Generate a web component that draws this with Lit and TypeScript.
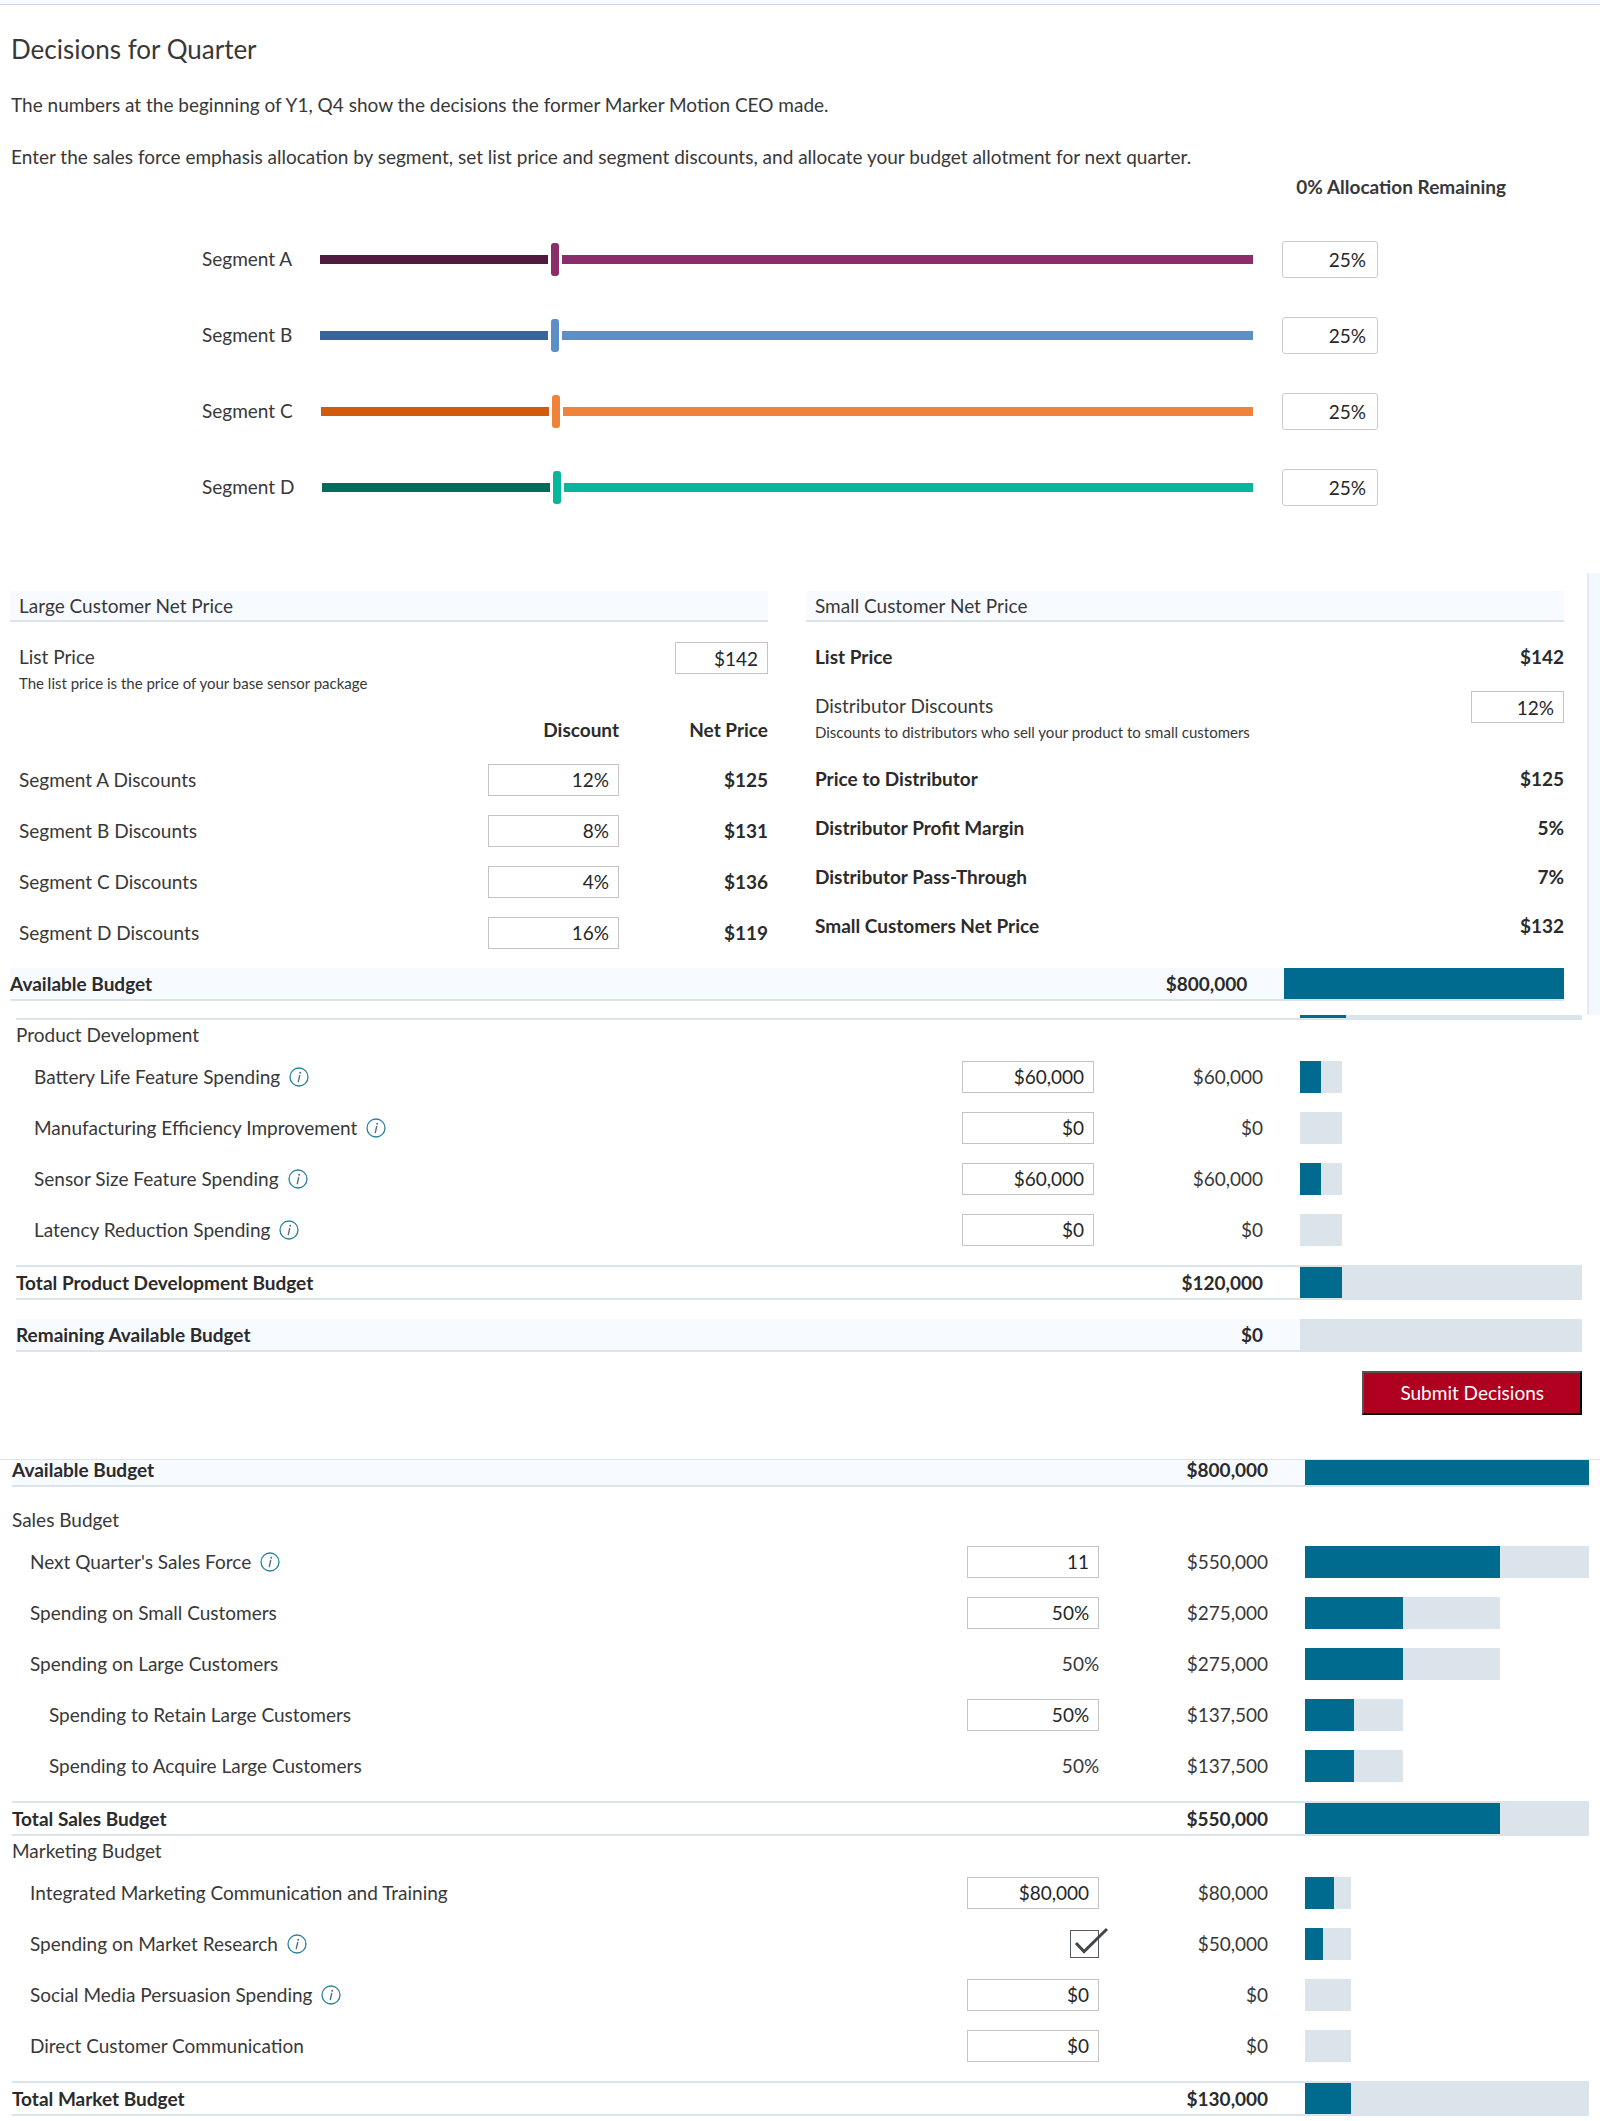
import { LitElement, html, css, nothing } from "lit";
import { customElement, property } from "lit/decorators.js";

interface Segment { name: string; share: number; dark: string; light: string; discount: string; net: string; }
interface Line {
  label: string;
  amount: string;
  track: number;
  fill: number;
  value?: string;
  fixed?: string;
  checked?: boolean;
  info?: boolean;
  nested?: boolean;
}

const SEGMENTS: Segment[] = [
  { name: "Segment A", share: 25, dark: "#511b3f", light: "#8a2d69", discount: "12%", net: "$125" },
  { name: "Segment B", share: 25, dark: "#36669d", light: "#5b8fc6", discount: "8%", net: "$131" },
  { name: "Segment C", share: 25, dark: "#d25a0c", light: "#f0833a", discount: "4%", net: "$136" },
  { name: "Segment D", share: 25, dark: "#056b5b", light: "#09b59b", discount: "16%", net: "$119" },
];

const PRODUCT: Line[] = [
  { label: "Battery Life Feature Spending", info: true, value: "$60,000", amount: "$60,000", track: 15, fill: 50 },
  { label: "Manufacturing Efficiency Improvement", info: true, value: "$0", amount: "$0", track: 15, fill: 0 },
  { label: "Sensor Size Feature Spending", info: true, value: "$60,000", amount: "$60,000", track: 15, fill: 50 },
  { label: "Latency Reduction Spending", info: true, value: "$0", amount: "$0", track: 15, fill: 0 },
];

const SALES: Line[] = [
  { label: "Next Quarter's Sales Force", info: true, value: "11", amount: "$550,000", track: 100, fill: 68.75 },
  { label: "Spending on Small Customers", value: "50%", amount: "$275,000", track: 68.75, fill: 50 },
  { label: "Spending on Large Customers", fixed: "50%", amount: "$275,000", track: 68.75, fill: 50 },
  { label: "Spending to Retain Large Customers", nested: true, value: "50%", amount: "$137,500", track: 34.375, fill: 50 },
  { label: "Spending to Acquire Large Customers", nested: true, fixed: "50%", amount: "$137,500", track: 34.375, fill: 50 },
];

const MARKETING: Line[] = [
  { label: "Integrated Marketing Communication and Training", value: "$80,000", amount: "$80,000", track: 16.25, fill: 61.5 },
  { label: "Spending on Market Research", info: true, checked: true, amount: "$50,000", track: 16.25, fill: 38.5 },
  { label: "Social Media Persuasion Spending", info: true, value: "$0", amount: "$0", track: 16.25, fill: 0 },
  { label: "Direct Customer Communication", value: "$0", amount: "$0", track: 16.25, fill: 0 },
];

const slug = (s: string) => s.toLowerCase().replace(/[^a-z]+/g, "-");

const shared = css`
  :host {
    display: block;
    font-family: Lato, "Liberation Sans", sans-serif;
    font-size: 19px;
    line-height: 24px;
    color: #383838;
  }
  *, *::before, *::after { box-sizing: border-box; }
  .entry {
    height: 32px;
    margin: 0;
    padding: 0 9px;
    border: 1px solid #c4c4c4;
    border-radius: 0;
    background: #fff;
    font: inherit;
    color: #262626;
    text-align: right;
  }
  table { width: 100%; border-collapse: separate; border-spacing: 0; table-layout: fixed; }
  th, td { padding: 0; font-weight: 400; text-align: left; }
`;

@customElement("segment-sliders")
class SegmentSliders extends LitElement {
  static styles = [shared, css`
    .row { display: flex; align-items: center; height: 76px; padding: 0 222px 0 202px; }
    .range {
      flex: 1;
      min-width: 0;
      height: 34px;
      margin: 0 29px 0 28px;
      appearance: none;
      background: none;
    }
    .range::-webkit-slider-runnable-track {
      height: 9px;
      background: linear-gradient(to right, var(--dark) var(--share), var(--light) var(--share));
    }
    .range::-webkit-slider-thumb {
      appearance: none;
      width: 8px;
      height: 33px;
      margin-top: -12px;
      border-radius: 3px;
      background: var(--light);
      box-shadow: 0 0 0 3px #fff;
    }
    .entry { width: 96px; height: 37px; padding: 0 11px; border-radius: 3px; border-color: #ccc; }
  `];

  render() {
    return SEGMENTS.map((s) => {
      const id = slug(s.name);
      return html`<div class="row" style="--dark:${s.dark};--light:${s.light};--share:${s.share}%">
        <label for=${id}>${s.name}</label>
        <input class="range" type="range" min="0" max="100" .value=${String(s.share)} id=${id} />
        <input class="entry" type="text" .value=${s.share + "%"} aria-label="${s.name} allocation" />
      </div>`;
    });
  }
}

@customElement("price-panels")
class PricePanels extends LitElement {
  static styles = [shared, css`
    .panels { display: grid; grid-template-columns: 1fr 1fr; gap: 38px; }
    .title {
      margin: 0;
      padding: 3px 9px 2px;
      border-bottom: 2px solid #dce4ea;
      background: #f7faff;
      font-size: inherit;
      font-weight: 400;
    }
    .body { display: flex; flex-direction: column; gap: 25px; padding: 23px 0 0 9px; }
    .field { display: flex; justify-content: space-between; align-items: flex-start; }
    .note { margin: 4px 0 0; font-size: 15px; line-height: 20px; }
    .short { width: 93px; margin-top: -3px; }
    .strong, .net, .head th { font-weight: 700; color: #2b2b2b; }
    .discounts .entry { display: block; width: 100%; }
    .c-entry { width: 131px; }
    .c-net { width: 149px; }
    .head th { height: 36px; vertical-align: top; }
    .head th, .net { text-align: right; }
    .discounts tbody tr { height: 51px; }
  `];

  render() {
    const facts = [["Price to Distributor", "$125"], ["Distributor Profit Margin", "5%"],
      ["Distributor Pass-Through", "7%"], ["Small Customers Net Price", "$132"]];
    return html`<div class="panels">
      <section>
        <h2 class="title">Large Customer Net Price</h2>
        <div class="body">
          <div class="field">
            <div>
              <label for="list-price">List Price</label>
              <p class="note">The list price is the price of your base sensor package</p>
            </div>
            <input class="entry short" id="list-price" type="text" value="$142" />
          </div>
          <table class="discounts">
            <colgroup><col /><col class="c-entry" /><col class="c-net" /></colgroup>
            <thead class="head"><tr><td></td><th scope="col">Discount</th><th scope="col">Net Price</th></tr></thead>
            <tbody>
              ${SEGMENTS.map((s) => {
                const id = slug(s.name) + "-discount";
                return html`<tr>
                  <th scope="row"><label for=${id}>${s.name} Discounts</label></th>
                  <td><input class="entry" id=${id} type="text" .value=${s.discount} /></td>
                  <td class="net">${s.net}</td>
                </tr>`;
              })}
            </tbody>
          </table>
        </div>
      </section>
      <section>
        <h2 class="title">Small Customer Net Price</h2>
        <div class="body">
          <div class="field strong"><span>List Price</span><span>$142</span></div>
          <div class="field">
            <div>
              <label for="distributor">Distributor Discounts</label>
              <p class="note">Discounts to distributors who sell your product to small customers</p>
            </div>
            <input class="entry short" id="distributor" type="text" value="12%" />
          </div>
          ${facts.map(([k, v]) => html`<div class="field strong"><span>${k}</span><span>${v}</span></div>`)}
        </div>
      </section>
    </div>`;
  }
}

@customElement("budget-table")
class BudgetTable extends LitElement {
  @property() kind: "items" | "total" | "summary" | "tight" = "items";
  @property() heading = "";
  @property() amount = "";
  @property({ type: Number }) fill = 0;
  @property({ attribute: false }) lines: Line[] = [];

  static styles = [shared, css`
    .c-entry { width: 132px; }
    .c-amount { width: 206px; }
    .c-bar { width: 18%; }
    .items tr { height: 51px; }
    .heading { height: 31px; margin: 0; padding-top: 3px; font-size: inherit; font-weight: 400; }
    .name { display: flex; align-items: center; gap: 9px; padding-left: 18px; }
    .nested { padding-left: 37px; }
    .entry { display: block; width: 100%; }
    .amount, .fixed { text-align: right; }
    .amount { padding-right: 37px; }
    .track { display: flex; height: 32px; background: #dce4eb; }
    .fill { background: #006b8f; }
    .sum th, .sum td { border-bottom: 2px solid #dce4eb; }
    .sum .name, .sum .label, .sum .amount { font-weight: 700; color: #2b2b2b; }
    .total th, .total td { border-top: 2px solid #dce4eb; }
    .sum .track { height: 31px; }
    .summary, .tight { background: #f7faff; }
    .tight { line-height: 20px; }
    .tight .label, .tight .amount { padding-bottom: 5px; }
    .tight .track { height: 25px; }
    .info {
      display: inline-flex;
      align-items: center;
      justify-content: center;
      width: 20px;
      height: 20px;
      padding: 0;
      border: 0;
      background: none;
      color: #2a819c;
    }
    .info svg { display: block; width: 20px; height: 20px; }
    .tick { position: relative; width: 29px; height: 28px; margin-left: auto; }
    .box {
      display: block;
      width: 29px;
      height: 28px;
      margin: 0;
      appearance: none;
      border: 1px solid #555b60;
      background: #fff;
    }
    .mark { position: absolute; left: 0; top: -4px; width: 40px; height: 32px; pointer-events: none; }
  `];

  private bar(track: number, fill: number) {
    return html`<div class="track" style="width:${track}%"><div class="fill" style="width:${fill}%"></div></div>`;
  }

  private control(l: Line, id: string) {
    if (l.checked !== undefined) {
      return html`<div class="tick">
        <input class="box" id=${id} type="checkbox" .checked=${l.checked} />
        <svg class="mark" viewBox="0 0 40 32" aria-hidden="true">
          <path d="M6 17 L14 25.5 L37 3" fill="none" stroke="#41474d" stroke-width="3" />
        </svg>
      </div>`;
    }
    return l.value !== undefined
      ? html`<input class="entry" id=${id} type="text" .value=${l.value} />`
      : l.fixed;
  }

  private cols() {
    return html`<colgroup><col /><col class="c-entry" /><col class="c-amount" /><col class="c-bar" /></colgroup>`;
  }

  render() {
    if (this.kind !== "items") {
      return html`<table>${this.cols()}<tbody><tr class="sum ${this.kind}">
        <th class="label" scope="row" colspan="2">${this.heading}</th>
        <td class="amount">${this.amount}</td>
        <td>${this.bar(100, this.fill)}</td>
      </tr></tbody></table>`;
    }
    return html`<h2 class="heading">${this.heading}</h2>
      <table class="items">${this.cols()}<tbody>
        ${this.lines.map((l) => {
          const id = slug(l.label);
          const isInput = l.fixed === undefined;
          return html`<tr>
            <th scope="row"><div class="name ${l.nested ? "nested" : ""}">
              ${isInput ? html`<label for=${id}>${l.label}</label>` : html`<span>${l.label}</span>`}
              ${l.info ? html`<button class="info" type="button" aria-label="About ${l.label}">
                <svg viewBox="0 0 20 20" aria-hidden="true">
                  <circle cx="10" cy="10" r="9" fill="none" stroke="currentColor" stroke-width="1.3" />
                  <circle cx="11.2" cy="5.8" r="1" fill="#56707c" />
                  <path d="M10.7 8.4 L9.3 14.6" stroke="#56707c" stroke-width="1.4" stroke-linecap="round" />
                </svg></button>` : nothing}
            </div></th>
            <td class="fixed">${this.control(l, id)}</td>
            <td class="amount">${l.amount}</td>
            <td>${this.bar(l.track, l.fill)}</td>
          </tr>`;
        })}
      </tbody></table>`;
  }
}

@customElement("app-root")
class AppRoot extends LitElement {
  static styles = [shared, css`
    :host { background: #fff; }
    .topbar { height: 5px; border-bottom: 1px solid #cdd6ea; background: #f7faff; }
    .intro { padding: 28px 11px 0; }
    .intro h1 { margin: 0; font-size: 26px; font-weight: 400; line-height: 32px; }
    .intro p { margin: 28px 0 0; }
    .remaining { padding: 6px 94px 22px 0; text-align: right; font-weight: 700; }
    .pricing {
      margin-top: 48px;
      padding: 18px 25px 14px 10px;
      border-right: 11px solid #f3f7ff;
      box-shadow: inset -2px 0 #e3ebf8;
    }
    .available { margin-top: 10px; }
    .product { padding: 0 18px 44px 16px; }
    .band { border-bottom: 2px solid #dce4eb; }
    .band-track { width: 18%; height: 3px; margin-left: auto; background: #dce4eb; }
    .band-fill { height: 3px; background: #006b8f; }
    .total { margin-top: 10px; }
    .rest { margin-top: 19px; }
    .actions { display: flex; justify-content: flex-end; margin-top: 19px; }
    .submit {
      height: 44px;
      padding: 0 36px;
      border: 2px outset #000;
      border-radius: 0;
      background: #b00020;
      color: #fff;
      font: inherit;
    }
    .sales { padding: 0 11px 4px 12px; border-top: 1px solid #dce4eb; }
    .sales .first { margin-top: 18px; }
  `];

  render() {
    return html`
      <div class="topbar"></div>
      <main>
        <header class="intro">
          <h1>Decisions for Quarter</h1>
          <p>The numbers at the beginning of Y1, Q4 show the decisions the former Marker Motion CEO made.</p>
          <p>Enter the sales force emphasis allocation by segment, set list price and segment discounts, and allocate your budget allotment for next quarter.</p>
        </header>
        <div class="remaining">0% Allocation Remaining</div>
        <segment-sliders></segment-sliders>
        <section class="pricing">
          <price-panels></price-panels>
          <budget-table class="available" kind="summary" heading="Available Budget" amount="$800,000" fill="100"></budget-table>
        </section>
        <section class="product">
          <div class="band"><div class="band-track"><div class="band-fill" style="width:16.25%"></div></div></div>
          <budget-table heading="Product Development" .lines=${PRODUCT}></budget-table>
          <budget-table class="total" kind="total" heading="Total Product Development Budget" amount="$120,000" fill="15"></budget-table>
          <budget-table class="rest" kind="summary" heading="Remaining Available Budget" amount="$0" fill="0"></budget-table>
          <div class="actions"><button class="submit" type="button">Submit Decisions</button></div>
        </section>
        <section class="sales">
          <budget-table kind="tight" heading="Available Budget" amount="$800,000" fill="100"></budget-table>
          <budget-table class="first" heading="Sales Budget" .lines=${SALES}></budget-table>
          <budget-table class="total" kind="total" heading="Total Sales Budget" amount="$550,000" fill="68.75"></budget-table>
          <budget-table heading="Marketing Budget" .lines=${MARKETING}></budget-table>
          <budget-table class="total" kind="total" heading="Total Market Budget" amount="$130,000" fill="16.25"></budget-table>
        </section>
      </main>`;
  }
}
